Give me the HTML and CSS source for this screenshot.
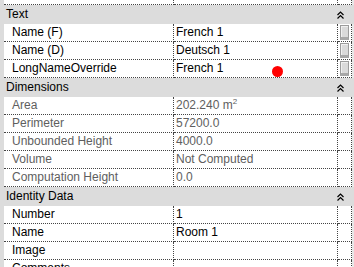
FILE: index.html
```html
<!DOCTYPE html>
<html>
<head>
<meta charset="utf-8">
<link rel="stylesheet" href="styles.css">
</head>
<body>
<div class="props">
  <div class="row partial"><div class="gutter"></div><div class="label"></div><div class="value"></div><div class="extra"></div><div class="edge"></div></div>

  <div class="group"><span class="gtitle">Text</span><svg class="chev" width="7" height="8" viewBox="0 0 7 8"><path d="M0.5 4 L3.5 1 L6.5 4 M0.5 7.5 L3.5 4.5 L6.5 7.5" fill="none" stroke="#000" stroke-width="1.2"/></svg></div>
  <div class="row"><div class="gutter"></div><div class="label">Name (F)</div><div class="value">French 1</div><div class="extra"><span class="btn"></span></div><div class="edge"></div></div>
  <div class="row"><div class="gutter"></div><div class="label">Name (D)</div><div class="value">Deutsch 1</div><div class="extra"><span class="btn"></span></div><div class="edge"></div></div>
  <div class="row"><div class="gutter"></div><div class="label">LongNameOverride</div><div class="value">French 1<span class="dot"></span></div><div class="extra"><span class="btn"></span></div><div class="edge"></div></div>

  <div class="group"><span class="gtitle">Dimensions</span><svg class="chev" width="7" height="8" viewBox="0 0 7 8"><path d="M0.5 4 L3.5 1 L6.5 4 M0.5 7.5 L3.5 4.5 L6.5 7.5" fill="none" stroke="#000" stroke-width="1.2"/></svg></div>
  <div class="row ro"><div class="gutter"></div><div class="label">Area</div><div class="value">202.240 m<sup>2</sup></div><div class="extra"></div><div class="edge"></div></div>
  <div class="row ro"><div class="gutter"></div><div class="label">Perimeter</div><div class="value">57200.0</div><div class="extra"></div><div class="edge"></div></div>
  <div class="row ro"><div class="gutter"></div><div class="label">Unbounded Height</div><div class="value">4000.0</div><div class="extra"></div><div class="edge"></div></div>
  <div class="row ro"><div class="gutter"></div><div class="label">Volume</div><div class="value">Not Computed</div><div class="extra"></div><div class="edge"></div></div>
  <div class="row ro"><div class="gutter"></div><div class="label">Computation Height</div><div class="value">0.0</div><div class="extra"></div><div class="edge"></div></div>

  <div class="group"><span class="gtitle">Identity Data</span><svg class="chev" width="7" height="8" viewBox="0 0 7 8"><path d="M0.5 4 L3.5 1 L6.5 4 M0.5 7.5 L3.5 4.5 L6.5 7.5" fill="none" stroke="#000" stroke-width="1.2"/></svg></div>
  <div class="row"><div class="gutter"></div><div class="label">Number</div><div class="value">1</div><div class="extra"></div><div class="edge"></div></div>
  <div class="row"><div class="gutter"></div><div class="label">Name</div><div class="value">Room 1</div><div class="extra"></div><div class="edge"></div></div>
  <div class="row"><div class="gutter"></div><div class="label">Image</div><div class="value"></div><div class="extra"></div><div class="edge"></div></div>
  <div class="row"><div class="gutter"></div><div class="label">Comments</div><div class="value"></div><div class="extra"></div><div class="edge"></div></div>
</div>
</body>
</html>
```
FILE: styles.css
```css
html, body {
  margin: 0;
  padding: 0;
  background: #fff;
  overflow: hidden;
}
.props {
  width: 354px;
  font-family: "Liberation Sans", Arial, sans-serif;
  font-size: 12px;
  color: #000;
}
.row {
  display: flex;
  height: 18px;
  line-height: 17px;
}
.row.partial {
  height: 5px;
}
.gutter {
  width: 4px;
  flex: none;
  background: #dcdcdc;
}
.label, .value, .extra {
  box-sizing: border-box;
  border-bottom: 1px dotted #444;
  border-right: 1px dotted #444;
  white-space: nowrap;
  overflow: hidden;
}
.label {
  width: 170px;
  flex: none;
  padding-left: 8px;
}
.value {
  width: 164px;
  flex: none;
  padding-left: 2px;
  position: relative;
  overflow: visible;
}
.extra {
  width: 14px;
  flex: none;
  padding: 1px 0 0 2px;
}
.edge {
  flex: 1;
  background: #e8e8e8;
}
.ro .label, .ro .value {
  color: #5e5e5e;
}
.value sup {
  font-size: 8px;
  line-height: 0;
  vertical-align: 5px;
}
.btn {
  display: block;
  width: 9px;
  height: 15px;
  box-sizing: border-box;
  background: #dadada;
  border: 1px solid #9c9c9c;
  border-bottom: 3px solid #a8a8a8;
  box-shadow: inset 1px 1px 0 #f0f0f0;
}
.group {
  display: flex;
  align-items: center;
  height: 19px;
  line-height: 19px;
  background: #dcdcdc;
  padding-left: 6px;
}
.gtitle {
  flex: 1;
}
.chev {
  margin-right: 10px;
  flex: none;
}
.dot {
  position: absolute;
  left: 98px;
  top: 6px;
  width: 11px;
  height: 11px;
  border-radius: 50%;
  background: #f00;
}
```
